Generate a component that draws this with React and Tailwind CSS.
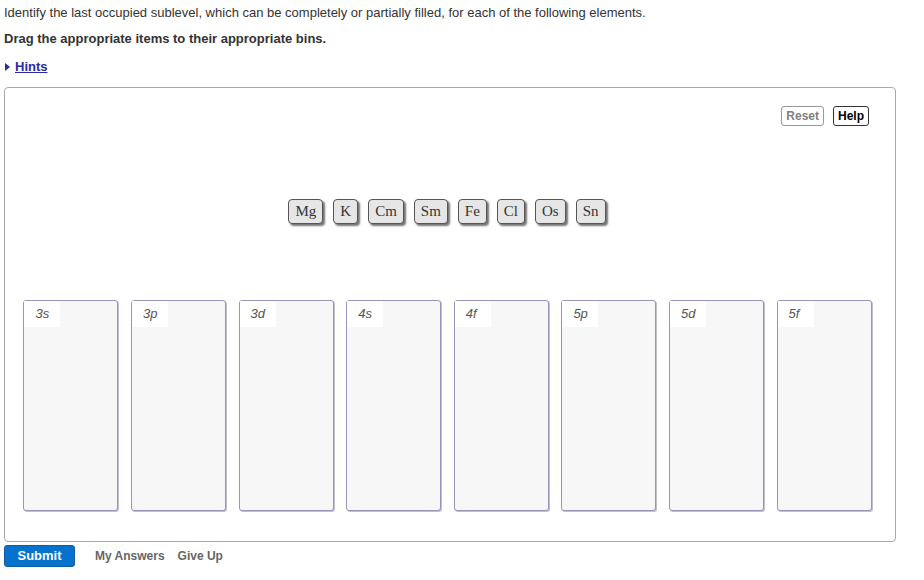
import React from "react";

const elements = ["Mg", "K", "Cm", "Sm", "Fe", "Cl", "Os", "Sn"];
const bins = ["3s", "3p", "3d", "4s", "4f", "5p", "5d", "5f"];

const App = () => {
  return (
    <div className="w-[924px] h-[580px] bg-white text-[#333] font-['Liberation_Sans',Arial,sans-serif] overflow-hidden">
      {/* Instructions */}
      <div className="pl-[4px] pt-[5px]">
        <p className="text-[13px] leading-[16px]">
          Identify the last occupied sublevel, which can be completely or partially filled, for each of the following elements.
        </p>
        <p className="text-[13px] leading-[16px] font-bold mt-[10px]">
          Drag the appropriate items to their appropriate bins.
        </p>
        <div className="flex items-center mt-[12px] h-[16px]">
          <span className="ml-[1px] w-0 h-0 border-y-[4px] border-y-transparent border-l-[5px] border-l-[#2a2aa6]" />
          <a className="ml-[5px] text-[13px] font-bold text-[#2a2aa6] underline">Hints</a>
        </div>
      </div>

      {/* Drag and drop area */}
      <div className="mt-[12px] ml-[4px] w-[892px] h-[455px] border border-[#aaa] rounded-[4px] flex flex-col">
        <div className="flex justify-end gap-[9px] pt-[18px] pr-[26px]">
          <button className="h-[20px] px-[4px] border border-[#999] rounded-[3px] text-[12px] font-bold text-[#808080] bg-white">
            Reset
          </button>
          <button className="h-[20px] px-[4px] border border-[#333] rounded-[3px] text-[12px] font-bold text-black bg-white">
            Help
          </button>
        </div>

        <div className="flex justify-center gap-[10px] mt-[73px] mr-[6px]">
          {elements.map((el) => (
            <div
              key={el}
              className="h-[25px] px-[6px] flex items-center border border-[#555] rounded-[4px] bg-[#e6e6e6] shadow-[2px_2px_2px_rgba(0,0,0,0.55)] font-['Liberation_Serif','Times_New_Roman',serif] text-[15px] text-[#333]"
            >
              {el}
            </div>
          ))}
        </div>

        <div className="flex justify-center gap-[12.6px] mt-[76px] mr-[5px]">
          {bins.map((b) => (
            <div
              key={b}
              className="w-[95px] h-[211px] border border-[#9a94bb] rounded-[3px] bg-[#f7f7f7] shadow-[1px_1px_0_rgba(80,70,120,0.35)]"
            >
              <div className="w-[36px] h-[26px] bg-white flex items-center pl-[11px] text-[13px] italic text-[#555]">
                {b}
              </div>
            </div>
          ))}
        </div>
      </div>

      {/* Footer */}
      <div className="flex items-center mt-[3px] ml-[4px]">
        <button className="w-[71px] h-[22px] bg-[#0772cc] border border-[#0a5fa8] rounded-[3px] text-white text-[13px] font-bold">
          Submit
        </button>
        <span className="ml-[20px] text-[12px] font-bold text-[#666]">My Answers</span>
        <span className="ml-[13px] text-[12px] font-bold text-[#666]">Give Up</span>
      </div>
    </div>
  );
};

export default App;
